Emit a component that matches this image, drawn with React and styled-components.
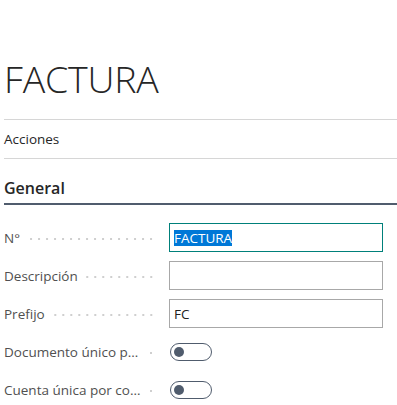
import React from 'react';
import styled, {createGlobalStyle} from 'styled-components';

const GlobalStyle = createGlobalStyle`
  html, body {
    margin: 0;
    padding: 0;
    background: #ffffff;
  }

  body {
    font-family: "Open Sans", "Noto Sans", sans-serif;
    color: #212121;
  }
`;

const fields = [
    {label: 'N°', value: 'FACTURA', focused: true},
    {label: 'Descripción', value: ''},
    {label: 'Prefijo', value: 'FC'},
];

const toggles = [
    'Documento único por tipo de movimiento',
    'Cuenta única por contrapartida',
];

const App = () => {

    return (
        <Page>
            <GlobalStyle/>
            <Title>FACTURA</Title>
            <ActionBar>Acciones</ActionBar>
            <Section>
                <SectionTitle>General</SectionTitle>
                <FieldList>
                    {fields.map(field => (
                        <Row key={field.label}>
                            <Caption>
                                <Label>{field.label}</Label>
                                <Leader/>
                            </Caption>
                            <Input focused={field.focused}>
                                {field.focused ? <Selected>{field.value}</Selected> : field.value}
                            </Input>
                        </Row>
                    ))}
                    {toggles.map(label => (
                        <Row key={label} title={label}>
                            <Caption>
                                <Label>{label}</Label>
                                <Leader/>
                            </Caption>
                            <Switch>
                                <Knob/>
                            </Switch>
                        </Row>
                    ))}
                </FieldList>
            </Section>
        </Page>
    )
}

const Page = styled.div`
  padding: 52px 0 0 4px;
`;

const Title = styled.h1`
  margin: 0;
  height: 67px;
  font-size: 37.5px;
  font-weight: 300;
  line-height: 54px;
  color: #262626;
  letter-spacing: -0.2px;
`;

const ActionBar = styled.div`
  height: 38px;
  display: flex;
  align-items: center;
  border-top: 1px solid #d6d6d6;
  border-bottom: 1px solid #d6d6d6;
  font-size: 13.5px;
  color: #262626;
`;

const Section = styled.section`
  padding-top: 15px;
`;

const SectionTitle = styled.h2`
  margin: 0;
  height: 29px;
  font-size: 16px;
  font-weight: 600;
  line-height: 28px;
  color: #262626;
  border-bottom: 2px solid #505c6d;
`;

const FieldList = styled.div`
  padding-top: 18px;
  display: flex;
  flex-direction: column;
  gap: 9px;
`;

const Row = styled.div`
  display: flex;
  align-items: center;
  height: 29px;
`;

const Caption = styled.div`
  width: 165px;
  display: flex;
  align-items: center;
  font-size: 13.5px;
  color: #505050;
`;

const Label = styled.span`
  max-width: 142px;
  white-space: nowrap;
  overflow: hidden;
  text-overflow: ellipsis;
`;

const Leader = styled.span`
  flex: 1;
  min-width: 8px;
  height: 2px;
  margin: 3px 11px 0 6px;
  background-image: linear-gradient(to right, #cfcfcf 2px, transparent 2px);
  background-size: 8px 2px;
  background-position: right center;
  background-repeat: repeat-x;
`;

const Input = styled.div`
  box-sizing: border-box;
  width: 214px;
  height: 29px;
  display: flex;
  align-items: center;
  padding: 0 4px;
  border: 1px solid ${props => props.focused ? '#00807a' : '#a8a8a8'};
  font-size: 13.5px;
  color: #212121;
`;

const Selected = styled.span`
  background: #0078d7;
  color: #ffffff;
  line-height: 16px;
`;

const Switch = styled.div`
  box-sizing: border-box;
  width: 42px;
  height: 18px;
  margin-left: 1px;
  display: flex;
  align-items: center;
  padding-left: 3px;
  border: 1.5px solid #505c6d;
  border-radius: 9px;
`;

const Knob = styled.span`
  width: 10px;
  height: 10px;
  border-radius: 50%;
  background: #505c6d;
`;

export default App;
